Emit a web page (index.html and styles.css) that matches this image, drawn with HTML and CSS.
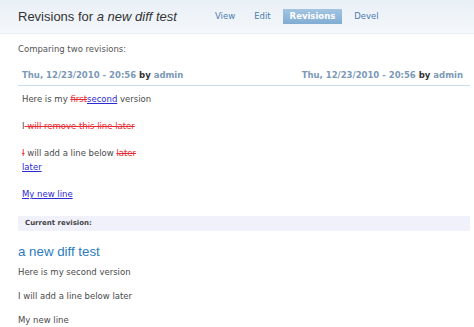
FILE: index.html
```html
<!DOCTYPE html>
<html lang="en">
<head>
  <meta charset="UTF-8">
  <title>Revisions for a new diff test</title>
  <link rel="stylesheet" href="styles.css">
</head>
<body>
  <div class="header">
    <h1 class="title">Revisions for <em>a new diff test</em></h1>
    <ul class="tabs">
      <li><a href="#">View</a></li>
      <li><a href="#">Edit</a></li>
      <li class="active"><a href="#">Revisions</a></li>
      <li><a href="#">Devel</a></li>
    </ul>
  </div>

  <div class="content">
    <div class="intro">Comparing two revisions:</div>

    <div class="diff-head">
      <div class="rev"><a href="#">Thu, 12/23/2010 - 20:56</a> by <a href="#">admin</a></div>
      <div class="rev"><a href="#">Thu, 12/23/2010 - 20:56</a> by <a href="#">admin</a></div>
    </div>

    <div class="diff-body">
      <p>Here is my <del>first</del><ins>second</ins> version</p>
      <p>I<del> will remove this line later</del></p>
      <p><del>I</del> will add a line below <del>later</del><br><ins>later</ins></p>
      <p><ins>My new line</ins></p>
    </div>

    <div class="current">Current revision:</div>

    <h2 class="node-title">a new diff test</h2>
    <div class="node-body">
      <p>Here is my second version</p>
      <p>I will add a line below later</p>
      <p>My new line</p>
    </div>
  </div>
</body>
</html>
```

FILE: styles.css
```css
body {
  margin: 0;
  font-family: "DejaVu Sans", Verdana, sans-serif;
  font-size: 8.5px;
  color: #4a4a4a;
  background: #fff;
}

a {
  text-decoration: none;
}

.header {
  display: flex;
  align-items: center;
  height: 33px;
  padding-left: 18px;
  background: linear-gradient(#e9f0f6, #f4f7fb);
  border-bottom: 1px solid #e6edf3;
}

.title {
  margin: 0;
  font-family: "Liberation Sans", Arial, sans-serif;
  font-size: 13px;
  font-weight: normal;
  color: #333;
}

.tabs {
  display: flex;
  gap: 5px;
  list-style: none;
  margin: 0 0 0 31px;
  padding: 0;
}

.tabs a {
  display: block;
  padding: 0 7px;
  line-height: 15px;
  color: #4c7bb0;
}

.tabs .active a {
  background: linear-gradient(#a3c5e2, #80acd2);
  color: #fff;
  font-weight: bold;
}

.content {
  padding: 9px 4px 0 18px;
}

.intro {
  line-height: 13px;
  color: #555;
}

.diff-head {
  display: flex;
  justify-content: space-between;
  margin-top: 13px;
  padding: 0 7px 3px 4px;
  line-height: 13px;
  font-weight: bold;
  color: #333;
  border-bottom: 1px solid #c8deee;
}

.diff-head a {
  color: #7b99b7;
}

.diff-body {
  padding: 6px 0 0 4px;
}

.diff-body p {
  margin: 0 0 13px;
  line-height: 14px;
}

del {
  color: #ea2a33;
}

ins {
  color: #2b2bd0;
  text-decoration: underline;
}

.current {
  margin-top: 15px;
  padding-left: 7px;
  line-height: 15px;
  font-size: 7px;
  font-weight: bold;
  color: #444;
  background: #f1f1fc;
}

.node-title {
  margin: 13px 0 0;
  font-family: "Liberation Sans", Arial, sans-serif;
  font-size: 13.3px;
  font-weight: normal;
  line-height: 16px;
  color: #2a7cbd;
}

.node-body {
  padding-top: 6px;
}

.node-body p {
  margin: 0 0 11px;
  line-height: 13px;
}
```
